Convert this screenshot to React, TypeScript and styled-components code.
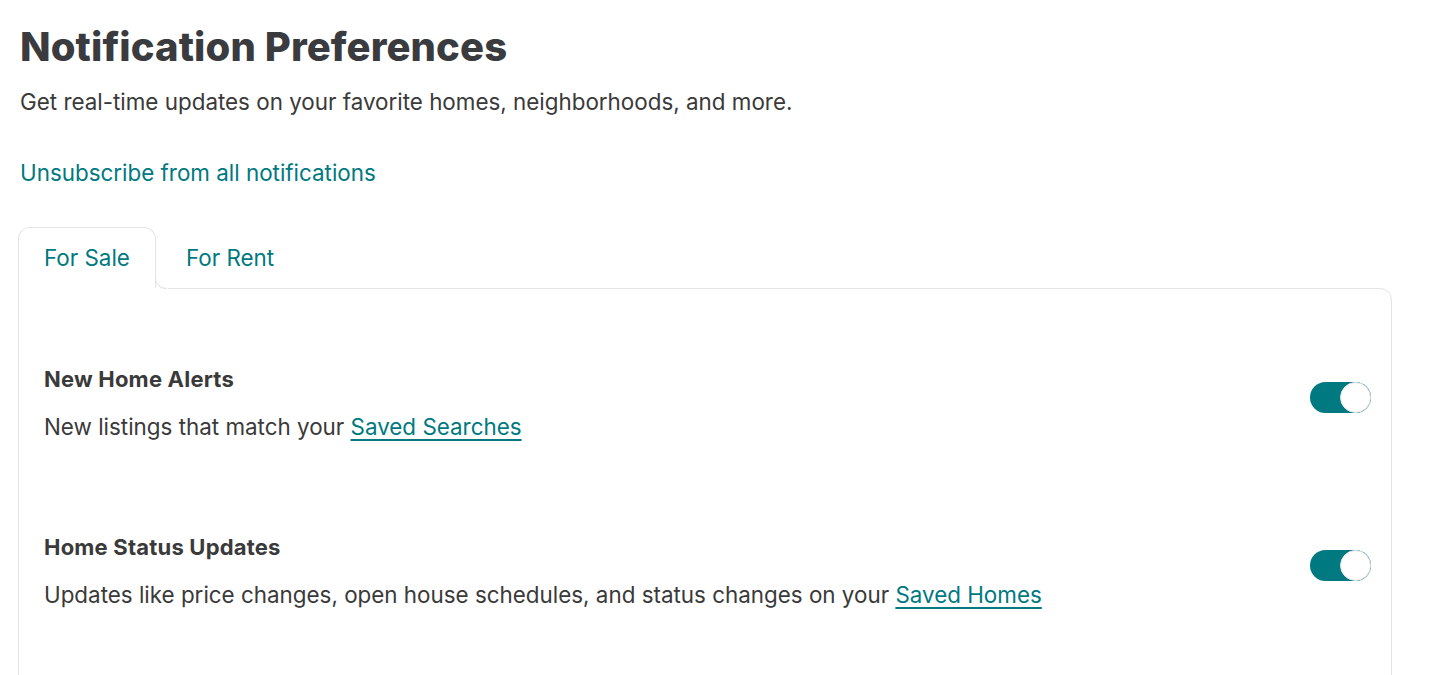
import React, { useState } from 'react'
import styled, { createGlobalStyle } from 'styled-components'

const GlobalStyle = createGlobalStyle`
    body {
        margin: 0;
        background: #fff;
        font-family: Inter, "Noto Sans", "Liberation Sans", sans-serif;
        color: #3a3a3a;
    }
`

const TEAL = '#007980'
const LINE = '#e4e4e4'

const Page = styled.div`
    padding: 23px 0 0 20px;
    width: 1372px;
`

const Title = styled.h1`
    margin: 0;
    font-size: 40px;
    line-height: 48px;
    font-weight: 800;
    letter-spacing: 0.1px;
    color: #3a3b3e;
`

const Subtitle = styled.p`
    margin: 16px 0 0;
    font-size: 22.4px;
    line-height: 30px;
    color: #3a3a3a;
`

const Unsubscribe = styled.a`
    display: block;
    width: fit-content;
    margin-top: 41px;
    font-size: 22.4px;
    line-height: 30px;
    color: ${TEAL};
    text-decoration: none;
    cursor: pointer;
`

const TabBar = styled.div`
    display: flex;
    gap: 4px;
    margin-top: 39px;
    margin-left: -2px;
    margin-bottom: -1px;
    position: relative;
    z-index: 1;
`

const Tab = styled.button<{ $active?: boolean }>`
    position: relative;
    font-family: inherit;
    font-size: 22.4px;
    line-height: 30px;
    color: ${TEAL};
    background: ${p => (p.$active ? '#fff' : 'transparent')};
    height: 62px;
    padding: 0 25px 1px;
    border: 1px solid ${p => (p.$active ? LINE : 'transparent')};
    border-bottom: none;
    border-radius: 12px 12px 0 0;
    cursor: pointer;

    ${p =>
        p.$active &&
        `
        &::before {
            content: '';
            position: absolute;
            right: -13px;
            bottom: 0;
            width: 13px;
            height: 1px;
            background: #fff;
        }
        &::after {
            content: '';
            position: absolute;
            right: -12px;
            bottom: 0;
            width: 11px;
            height: 10px;
            border-left: 1px solid ${LINE};
            border-bottom: 1px solid ${LINE};
            border-bottom-left-radius: 11px;
        }
    `}
`

const Panel = styled.div`
    margin-left: -2px;
    border: 1px solid ${LINE};
    border-radius: 0 12px 0 0;
    height: 420px;
    padding: 75px 20px 0 25px;
    box-sizing: border-box;
`

const Row = styled.div`
    display: flex;
    align-items: center;
    justify-content: space-between;
    margin-bottom: 90px;
`

const RowText = styled.div`
    display: flex;
    flex-direction: column;
    gap: 18px;
`

const RowTitle = styled.div`
    font-size: 22px;
    line-height: 30px;
    font-weight: 700;
    letter-spacing: 0.2px;
    color: #3a3a3a;
`

const RowDesc = styled.div`
    font-size: 22.4px;
    line-height: 30px;
    color: #3a3a3a;
`

const InlineLink = styled.a`
    color: ${TEAL};
    text-decoration: underline;
    text-underline-offset: 4px;
    text-decoration-thickness: 2px;
    cursor: pointer;
`

const Switch = styled.button<{ $on: boolean }>`
    position: relative;
    width: 61px;
    height: 31px;
    margin-bottom: 11px;
    border: none;
    padding: 0;
    border-radius: 16px;
    background: ${p => (p.$on ? TEAL : '#cfcfcf')};
    cursor: pointer;
`

const Knob = styled.span<{ $on: boolean }>`
    position: absolute;
    top: 0;
    left: ${p => (p.$on ? '30px' : '0')};
    width: 31px;
    height: 31px;
    border-radius: 50%;
    background: #fff;
    box-sizing: border-box;
    border: 1px solid #e2e2e2;
`

const Toggle: React.FC<{ initial: boolean }> = (props) => {
    const [on, setOn] = useState(props.initial)
    return (
        <Switch $on={on} onClick={() => setOn(!on)} aria-pressed={on}>
            <Knob $on={on} />
        </Switch>
    )
}

const App: React.FC = () => {
    const [tab, setTab] = useState('sale')

    return (
        <>
            <GlobalStyle />
            <Page>
                <Title>Notification Preferences</Title>
                <Subtitle>Get real-time updates on your favorite homes, neighborhoods, and more.</Subtitle>
                <Unsubscribe>Unsubscribe from all notifications</Unsubscribe>

                <TabBar>
                    <Tab $active={tab === 'sale'} onClick={() => setTab('sale')}>For Sale</Tab>
                    <Tab $active={tab === 'rent'} onClick={() => setTab('rent')}>For Rent</Tab>
                </TabBar>
                <Panel>
                    <Row>
                        <RowText>
                            <RowTitle>New Home Alerts</RowTitle>
                            <RowDesc>
                                New listings that match your <InlineLink>Saved Searches</InlineLink>
                            </RowDesc>
                        </RowText>
                        <Toggle initial={true} />
                    </Row>
                    <Row>
                        <RowText>
                            <RowTitle>Home Status Updates</RowTitle>
                            <RowDesc>
                                Updates like price changes, open house schedules, and status changes on your{' '}
                                <InlineLink>Saved Homes</InlineLink>
                            </RowDesc>
                        </RowText>
                        <Toggle initial={true} />
                    </Row>
                </Panel>
            </Page>
        </>
    )
}

export default App
